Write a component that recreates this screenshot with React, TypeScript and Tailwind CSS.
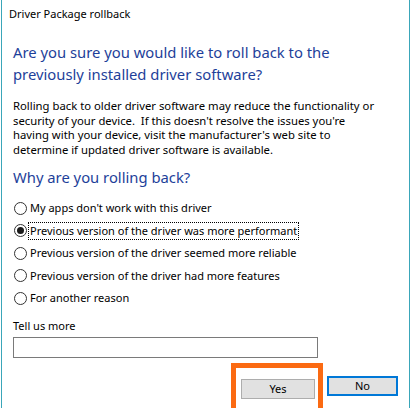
import React from "react";

const options = [
  "My apps don't work with this driver",
  "Previous version of the driver was more performant",
  "Previous version of the driver seemed more reliable",
  "Previous version of the driver had more features",
  "For another reason",
];

const Radio = ({ checked }: { checked: boolean }) => (
  <span className="flex h-[13px] w-[13px] shrink-0 items-center justify-center rounded-full border border-[#333] bg-white">
    {checked ? <span className="h-[7px] w-[7px] rounded-full bg-[#1a1a1a]" /> : null}
  </span>
);

const App = () => {
  const selected = 1;

  return (
    <div
      className="h-[408px] w-[412px] overflow-hidden bg-white text-black"
      style={{ fontFamily: '"Noto Sans", "Open Sans", sans-serif' }}
    >
      <div className="ml-px flex h-[408px] w-[409px] flex-col border-x border-[#3aa6b9]">
        <p className="pl-[7px] pt-[6px] text-[11px] leading-[16px]">Driver Package rollback</p>

        <div className="flex flex-col pl-[11px] pr-[11px]">
          <h1 className="mt-[19px] text-[14.8px] font-normal leading-[22px] text-[#1e3f9a]">
            Are you sure you would like to roll back to the
            <br />
            previously installed driver software?
          </h1>

          <p className="mt-[14px] text-[11.3px] leading-[14.5px]">
            Rolling back to older driver software may reduce the functionality or
            <br />
            security of your device.&nbsp; If this doesn't resolve the issues you're
            <br />
            having with your device, visit the manufacturer's web site to
            <br />
            determine if updated driver software is available.
          </p>

          <h2 className="mt-[9px] text-[14.8px] font-normal leading-[22px] text-[#1e3f9a]">
            Why are you rolling back?
          </h2>

          <div className="mt-[9px] flex flex-col">
            {options.map((label, i) => (
              <div key={label} className="flex h-[22.5px] items-center gap-[1px] pl-px">
                <Radio checked={i === selected} />
                <span
                  className={
                    i === selected
                      ? "border border-dotted border-black px-px text-[11px] leading-[16px]"
                      : "border border-transparent px-px text-[11px] leading-[16px]"
                  }
                >
                  {label}
                </span>
              </div>
            ))}
          </div>

          <p className="mt-[8.5px] text-[11px] leading-[16px]">Tell us more</p>
          <div className="mt-[3px] h-[21px] w-[305px] border border-[#7a7a7a] bg-white" />
        </div>

        <div className="mt-[5px] flex items-start justify-end gap-[4px] pr-[11px]">
          <div className="h-[50px] w-[92px] border-[5px] border-[#fb6a12] bg-white pl-[5px] pt-[7px]">
            <button className="h-[20px] w-[74px] border border-[#adadad] bg-[#e1e1e1] text-[11px] leading-[16px]">
              Yes
            </button>
          </div>
          <button className="mt-[13px] h-[20px] w-[71px] border-2 border-[#0078d7] bg-[#e1e1e1] text-[11px] leading-[14px]">
            No
          </button>
        </div>
      </div>
    </div>
  );
};

export default App;
